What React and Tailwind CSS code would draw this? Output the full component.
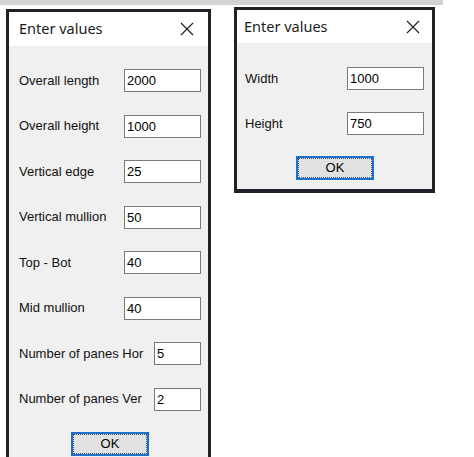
import React from 'react';

const CloseIcon = () => (
  <svg width="14" height="14" viewBox="0 0 14 14" className="block">
    <path d="M1 1 L13 13 M13 1 L1 13" stroke="#1a1a1a" strokeWidth="1.1" fill="none" />
  </svg>
);

const Field = ({ label, value, wide = true }) => (
  <div className="flex h-[23px] items-center justify-between">
    <span className="text-[13px] text-[#111]">{label}</span>
    <div
      className={`h-[23px] border border-[#7a7a7a] bg-white pl-[2px] pt-[2px] text-[13px] leading-[17px] text-black ${
        wide ? 'w-[77px]' : 'w-[47px]'
      }`}
    >
      {value}
    </div>
  </div>
);

const OkButton = () => (
  <div className="flex h-[24px] w-[78px] items-center justify-center border-2 border-[#1f6fc9] bg-[#e1e1e1]">
    <div className="flex h-full w-full items-center justify-center border border-dotted border-[#3b5a86] text-[13px] text-black">
      OK
    </div>
  </div>
);

const TitleBar = ({ cls }) => (
  <div className={`flex items-center justify-between bg-white ${cls}`}>
    <span className="text-[14.5px] text-[#1a1a1a]" style={{ fontFamily: '"Noto Sans", sans-serif' }}>
      Enter values
    </span>
    <CloseIcon />
  </div>
);

export default function App() {
  const fields = [
    ['Overall length', '2000', true],
    ['Overall height', '1000', true],
    ['Vertical edge', '25', true],
    ['Vertical mullion', '50', true],
    ['Top - Bot', '40', true],
    ['Mid mullion', '40', true],
    ['Number of panes Hor', '5', false],
    ['Number of panes Ver', '2', false],
  ];

  return (
    <div
      className="h-[457px] w-[474px] overflow-hidden bg-white"
      style={{ fontFamily: '"Liberation Sans", Arial, sans-serif' }}
    >
      <div className="h-[5px] w-[443px] bg-[#d3d3d3]" />
      <div className="flex items-start">
        {/* left dialog */}
        <div className="ml-[6px] mt-[4px] h-[460px] w-[205px] border-x-[3px] border-t-[3px] border-[#1f2226] bg-[#f0f0f0]">
          <TitleBar cls="h-[34px] pl-[10px] pr-[14px]" />
          <div className="flex flex-col gap-[22.5px] pl-[10px] pr-[7px] pt-[23px]">
            {fields.map(([l, v, w]) => (
              <Field key={l} label={l} value={v} wide={w} />
            ))}
          </div>
          <div className="ml-[62px] mt-[21px]">
            <OkButton />
          </div>
        </div>

        {/* right dialog */}
        <div className="ml-[23px] mt-[2px] h-[186px] w-[201px] border-[3px] border-b-4 border-[#1f2226] bg-[#f0f0f0]">
          <TitleBar cls="h-[33px] pl-[7px] pr-[12px]" />
          <div className="flex flex-col gap-[22px] pl-[8px] pr-[8px] pt-[24px]">
            <Field label="Width" value="1000" />
            <Field label="Height" value="750" />
          </div>
          <div className="ml-[59px] mt-[21px]">
            <OkButton />
          </div>
        </div>
      </div>
    </div>
  );
}
